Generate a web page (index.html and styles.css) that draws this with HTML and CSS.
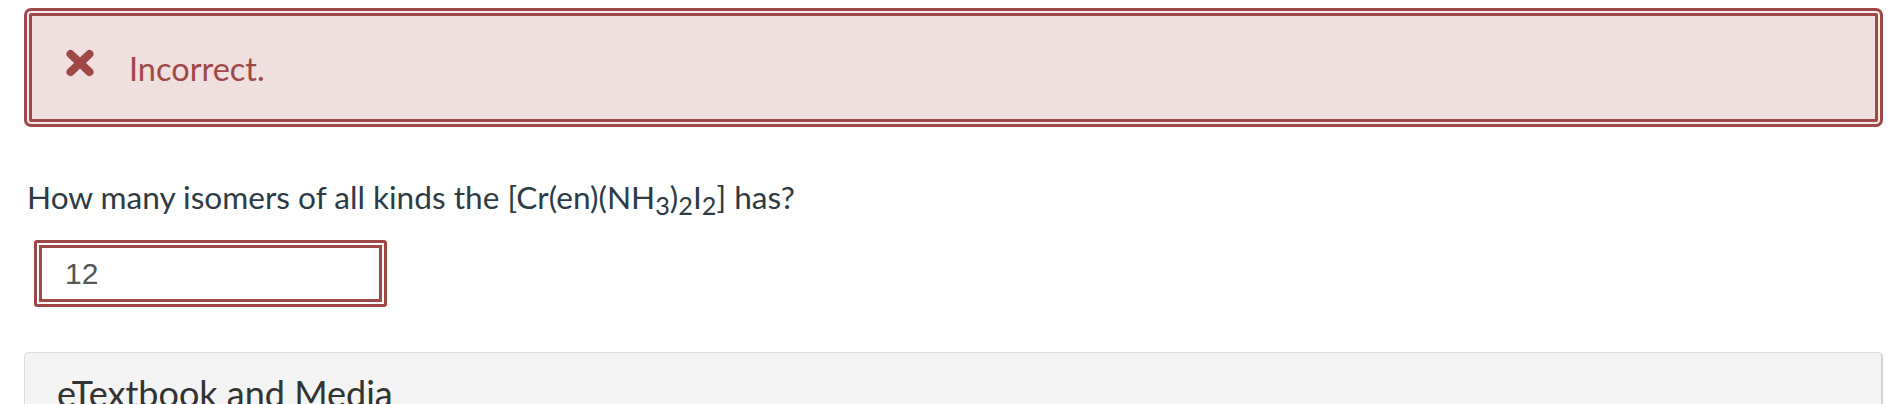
FILE: index.html
```html
<!DOCTYPE html>
<html lang="en">
<head>
<meta charset="utf-8">
<title>Question</title>
<link rel="stylesheet" href="styles.css">
</head>
<body>
<div class="page">
  <div class="alert">
    <svg class="alert-icon" viewBox="0 0 30 28" width="30" height="28" aria-hidden="true">
      <path d="M5.5 5 L24.5 23 M24.5 5 L5.5 23" stroke="#a04846" stroke-width="8" stroke-linecap="round" fill="none"/>
    </svg>
    <span class="alert-text">Incorrect.</span>
  </div>
  <p class="question">How many isomers of all kinds the [Cr(en)(NH<sub>3</sub>)<sub>2</sub>I<sub>2</sub>] has?</p>
  <div class="answer"><span class="answer-value">12</span></div>
  <div class="panel">
    <div class="panel-title">eTextbook and Media</div>
  </div>
</div>
</body>
</html>
```
FILE: styles.css
```css
html, body {
  margin: 0;
  padding: 0;
  background: #ffffff;
}
body {
  font-family: Lato, "Noto Sans", sans-serif;
  overflow: hidden;
}
.page {
  padding: 8px 15px 0 24px;
}
.alert {
  box-sizing: border-box;
  height: 119px;
  border: 3px solid #a04846;
  border-radius: 7px;
  background: #efdfdf;
  box-shadow: inset 0 0 0 2px #f7ecec, inset 0 0 0 5px #a04846;
  display: flex;
  align-items: center;
  padding-left: 38px;
}
.alert-icon {
  flex: none;
  margin-top: -10px;
}
.alert-text {
  margin-left: 34px;
  margin-top: 2px;
  color: #a04846;
  font-size: 32.5px;
  line-height: 40px;
}
.question {
  margin: 50px 0 0 3px;
  color: #2d3b45;
  font-size: 31.6px;
  line-height: 40px;
}
.question sub {
  font-size: 0.8em;
  line-height: 0;
  vertical-align: -0.22em;
}
.answer {
  box-sizing: border-box;
  margin: 23px 0 0 10px;
  width: 353px;
  height: 67px;
  border: 3px solid #a04846;
  border-radius: 3px;
  box-shadow: inset 0 0 0 2px #ffffff, inset 0 0 0 5px #a04846;
  background: #ffffff;
  display: flex;
  align-items: center;
  padding-left: 28px;
}
.answer-value {
  font-family: "Liberation Sans", Arial, sans-serif;
  color: #555555;
  font-size: 30px;
}
.panel {
  box-sizing: border-box;
  margin-top: 45px;
  height: 120px;
  border: 1px solid #dddddd;
  border-right: 2px solid #d6d6d6;
  border-radius: 5px;
  background: #f4f4f4;
  padding: 18px 0 0 32px;
}
.panel-title {
  color: #333333;
  font-size: 36px;
  line-height: 44px;
}
```
